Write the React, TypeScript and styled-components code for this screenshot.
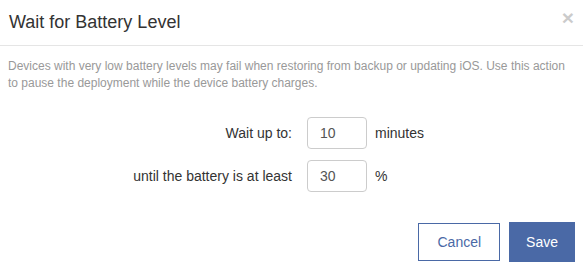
import React from "react";
import styled, { createGlobalStyle } from "styled-components";

const Global = createGlobalStyle`
  html, body { margin: 0; padding: 0; background: #fff; }
  body { font-family: "Liberation Sans", Arial, sans-serif; color: #333; }
  * { box-sizing: border-box; }
`;

const Modal = styled.div`
  width: 583px;
  height: 275px;
  background: #fff;
  display: flex;
  flex-direction: column;
`;

const Header = styled.div`
  height: 46px;
  border-bottom: 1px solid #e5e5e5;
  display: flex;
  align-items: center;
  justify-content: space-between;
  padding: 0 9px 0 9px;
`;

const Title = styled.h4`
  margin: 0;
  font-size: 18px;
  font-weight: normal;
  color: #333;
  line-height: 24px;
  padding-bottom: 2px;
`;

const Close = styled.button`
  border: 0;
  background: none;
  padding: 0;
  font-family: "Liberation Sans", Arial, sans-serif;
  font-size: 21px;
  font-weight: bold;
  line-height: 1;
  color: #000;
  opacity: 0.2;
  margin-bottom: 10px;
  cursor: pointer;
`;

const Body = styled.div`
  padding: 12px 8px 0 8px;
`;

const Desc = styled.p`
  margin: 0;
  font-size: 12px;
  line-height: 17px;
  color: #999;
`;

const Form = styled.div`
  display: grid;
  grid-template-columns: 299px 60px auto;
  row-gap: 11px;
  margin-top: 25px;
  align-items: center;
`;

const Label = styled.label`
  text-align: right;
  font-size: 14px;
  color: #333;
  padding-right: 15px;
`;

const Input = styled.input`
  width: 60px;
  height: 32px;
  border: 1px solid #ccc;
  border-radius: 4px;
  font-family: "Liberation Sans", Arial, sans-serif;
  font-size: 14px;
  color: #555;
  padding: 0 12px;
  outline: none;
`;

const Unit = styled.span`
  font-size: 14px;
  color: #333;
  padding-left: 8px;
`;

const Footer = styled.div`
  display: flex;
  justify-content: flex-end;
  align-items: center;
  gap: 9px;
  padding: 0 8px;
  margin-top: 30px;
`;

const Button = styled.button<{ $primary?: boolean }>`
  font-family: "Liberation Sans", Arial, sans-serif;
  font-size: 14px;
  height: ${(p) => (p.$primary ? "40px" : "38px")};
  padding: ${(p) => (p.$primary ? "0 16px" : "0 18px")};
  border: 1px solid #4a69a6;
  background: ${(p) => (p.$primary ? "#4a69a6" : "#fff")};
  color: ${(p) => (p.$primary ? "#fff" : "#4a69a6")};
  border-radius: 0;
  cursor: pointer;
`;

export default function App() {
  return (
    <>
      <Global />
      <Modal>
        <Header>
          <Title>Wait for Battery Level</Title>
          <Close aria-label="Close">×</Close>
        </Header>
        <Body>
          <Desc>
            Devices with very low battery levels may fail when restoring from backup or updating iOS. Use this action
            to pause the deployment while the device battery charges.
          </Desc>
          <Form>
            <Label>Wait up to:</Label>
            <Input defaultValue="10" />
            <Unit>minutes</Unit>
            <Label>until the battery is at least</Label>
            <Input defaultValue="30" />
            <Unit>%</Unit>
          </Form>
        </Body>
        <Footer>
          <Button>Cancel</Button>
          <Button $primary>Save</Button>
        </Footer>
      </Modal>
    </>
  );
}
